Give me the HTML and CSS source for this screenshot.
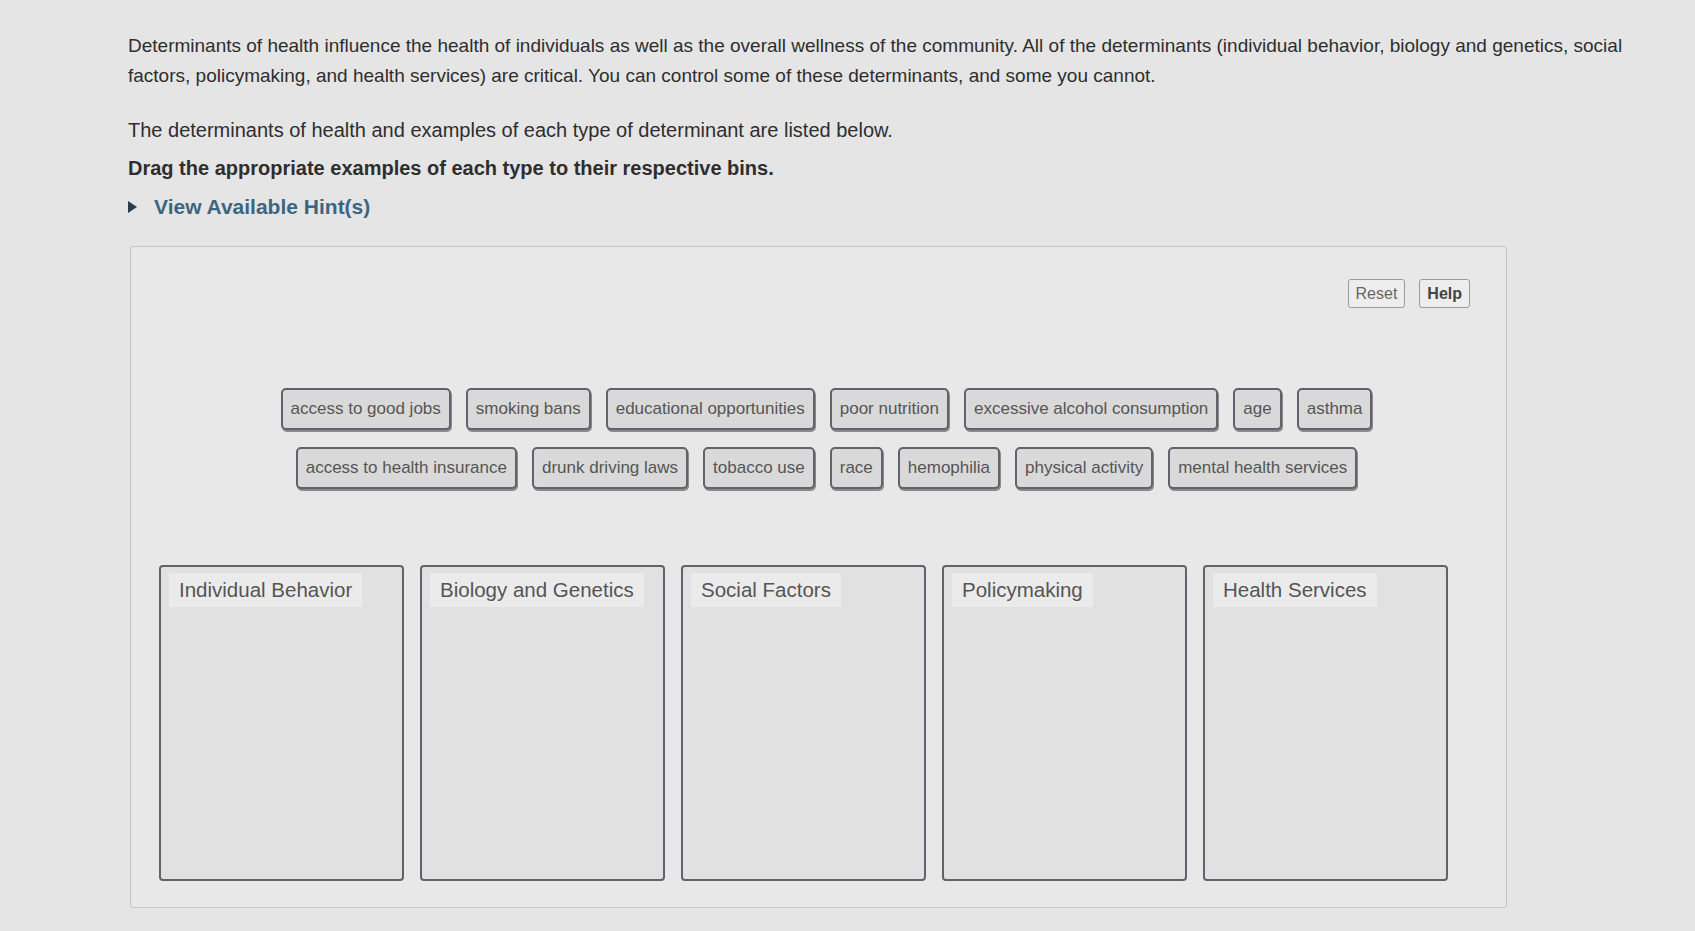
FILE: index.html
```html
<!DOCTYPE html>
<html lang="en">
<head>
<meta charset="utf-8">
<title>Determinants of health</title>
<link rel="stylesheet" href="styles.css">
</head>
<body>
<div class="page">
  <div class="intro">
    <p class="lead">Determinants of health influence the health of individuals as well as the overall wellness of the community. All of the determinants (individual behavior, biology and genetics, social factors, policymaking, and health services) are critical. You can control some of these determinants, and some you cannot.</p>
    <p class="line first">The determinants of health and examples of each type of determinant are listed below.</p>
    <p class="line strong">Drag the appropriate examples of each type to their respective bins.</p>
    <div class="hint"><span class="tri"></span><span>View Available Hint(s)</span></div>
  </div>

  <div class="panel">
    <div class="tools">
      <button class="tool">Reset</button>
      <button class="tool bold">Help</button>
    </div>
    <div class="chips">
      <div class="chip-row">
        <span class="chip">access to good jobs</span>
        <span class="chip">smoking bans</span>
        <span class="chip">educational opportunities</span>
        <span class="chip">poor nutrition</span>
        <span class="chip">excessive alcohol consumption</span>
        <span class="chip">age</span>
        <span class="chip">asthma</span>
      </div>
      <div class="chip-row">
        <span class="chip">access to health insurance</span>
        <span class="chip">drunk driving laws</span>
        <span class="chip">tobacco use</span>
        <span class="chip">race</span>
        <span class="chip">hemophilia</span>
        <span class="chip">physical activity</span>
        <span class="chip">mental health services</span>
      </div>
    </div>
    <div class="bins">
      <div class="bin"><div class="bin-title">Individual Behavior</div></div>
      <div class="bin"><div class="bin-title">Biology and Genetics</div></div>
      <div class="bin"><div class="bin-title">Social Factors</div></div>
      <div class="bin"><div class="bin-title">Policymaking</div></div>
      <div class="bin"><div class="bin-title">Health Services</div></div>
    </div>
  </div>
</div>
</body>
</html>
```
FILE: styles.css
```css
html, body {
  margin: 0;
  padding: 0;
}
body {
  background: #e5e5e5;
  font-family: "Liberation Sans", Arial, Helvetica, sans-serif;
  color: #333;
  width: 1695px;
  height: 931px;
  overflow: hidden;
}
.page {
  padding: 31px 0 0 128px;
}
.intro {
  width: 1530px;
}
.lead {
  margin: 0;
  font-size: 19px;
  line-height: 30px;
  color: #2e2e2e;
}
.line {
  margin: 12px 0 0 0;
  font-size: 20px;
  line-height: 26px;
  color: #2e2e2e;
}
.line.first {
  margin-top: 26px;
}
.line.strong {
  font-weight: bold;
}
.hint {
  display: flex;
  align-items: center;
  gap: 17px;
  margin-top: 14px;
  font-size: 21px;
  font-weight: bold;
  color: #3d6580;
}
.tri {
  width: 0;
  height: 0;
  border-top: 6px solid transparent;
  border-bottom: 6px solid transparent;
  border-left: 9px solid #2f3b45;
}
.panel {
  margin-top: 27px;
  margin-left: 2px;
  width: 1377px;
  border: 1px solid #c4c4c4;
  border-radius: 3px;
  background: #e8e8e8;
  padding: 32px 0 26px 0;
  box-sizing: border-box;
  display: flex;
  flex-direction: column;
}
.tools {
  display: flex;
  justify-content: flex-end;
  gap: 14px;
  padding-right: 36px;
}
.tool {
  font-family: "Liberation Sans", Arial, sans-serif;
  font-size: 16px;
  color: #666;
  background: #ededed;
  border: 1px solid #9a9a9a;
  border-radius: 3px;
  padding: 4px 7px;
  line-height: 19px;
}
.tool.bold {
  font-weight: bold;
  color: #444;
}
.chips {
  margin-top: 80px;
  display: flex;
  flex-direction: column;
  align-items: center;
  gap: 17px;
  padding-left: 16px;
}
.chip-row {
  display: flex;
  gap: 15px;
}
.chip {
  display: inline-block;
  font-size: 17px;
  line-height: 20px;
  color: #555;
  background: #d9d9d9;
  border: 2px solid #62626c;
  border-radius: 5px;
  padding: 9px 8px;
  box-shadow: 1px 2px 0 #8a8a8a;
}
.bins {
  margin-top: 76px;
  display: flex;
  gap: 16px;
  padding-left: 28px;
}
.bin {
  width: 245px;
  height: 316px;
  border: 2px solid #62626c;
  border-radius: 4px;
  background: #e1e1e1;
  box-sizing: border-box;
  padding: 6px 8px;
}
.bin-title {
  display: inline-block;
  background: #ebebeb;
  font-size: 20.5px;
  color: #555;
  padding: 5px 10px 5px 10px;
}
```
